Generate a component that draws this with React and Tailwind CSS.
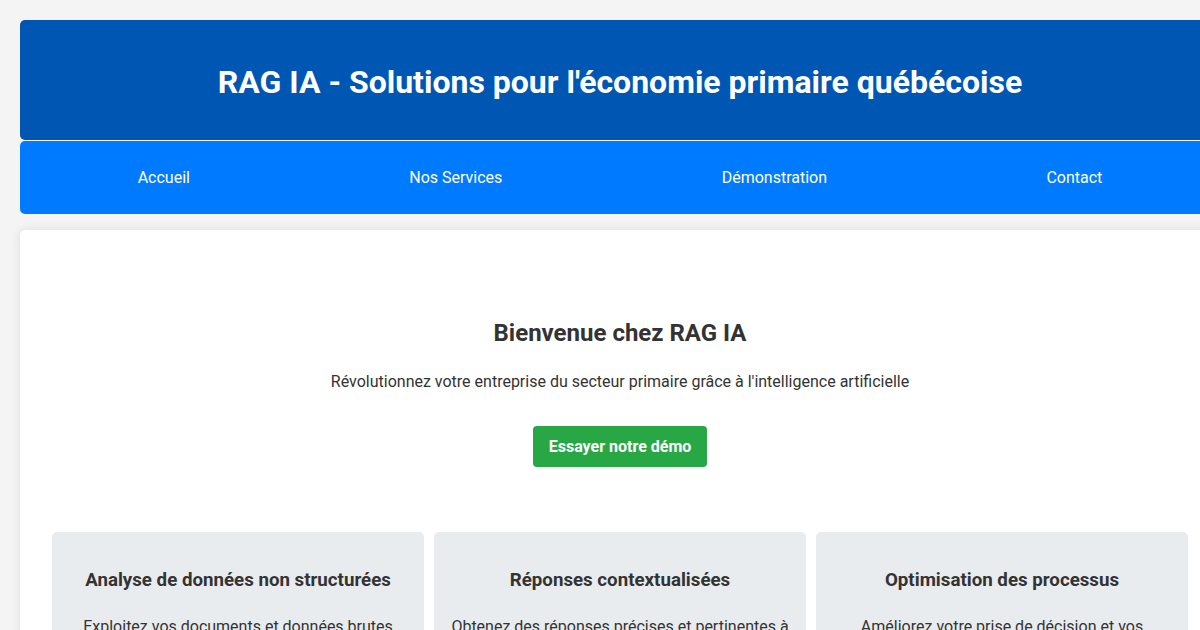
export default function App() {
  const features = [
    {
      title: "Analyse de données non structurées",
      text: "Exploitez vos documents et données brutes pour en extraire des informations précieuses.",
    },
    {
      title: "Réponses contextualisées",
      text: "Obtenez des réponses précises et pertinentes à vos questions spécifiques à votre secteur.",
    },
    {
      title: "Optimisation des processus",
      text: "Améliorez votre prise de décision et vos opérations grâce à l'IA.",
    },
  ];
  const nav = ["Accueil", "Nos Services", "Démonstration", "Contact"];
  return (
    <div
      className="w-[1200px] h-[630px] overflow-hidden bg-[#f4f4f4] text-[#333]"
      style={{ fontFamily: "Roboto, 'Liberation Sans', sans-serif" }}
    >
      <div className="pt-[20px] pl-[20px]">
        <div className="w-[1200px]">
          <header className="h-[120px] pt-[4px] bg-[#0056b3] rounded-[5px] flex items-center justify-center">
            <h1 className="text-[32px] font-bold text-white leading-[37px]">
              RAG IA - Solutions pour l'économie primaire québécoise
            </h1>
          </header>
          <nav className="mt-px h-[73px] bg-[#007bff] rounded-[5px] flex items-center justify-around px-2">
            {nav.map((n) => (
              <a key={n} className="text-white text-[16px] leading-[20px]">
                {n}
              </a>
            ))}
          </nav>
          <main className="mt-4 bg-white rounded-[5px] shadow-[0_0_10px_rgba(0,0,0,0.1)] px-8 pt-8 pb-10">
            <section className="text-center pt-[57px]">
              <h2 className="text-[24px] font-bold leading-[28px]">Bienvenue chez RAG IA</h2>
              <p className="mt-[23px] text-[16px] leading-[24px]">
                Révolutionnez votre entreprise du secteur primaire grâce à l'intelligence artificielle
              </p>
              <button className="mt-[32px] bg-[#28a745] text-white font-bold text-[16px] leading-[21px] py-[10px] px-[16px] rounded-[4px]">
                Essayer notre démo
              </button>
            </section>
            <section className="mt-[65px] grid grid-cols-3 gap-[10px]">
              {features.map((f) => (
                <div key={f.title} className="bg-[#e9ecef] rounded-[5px] px-[15px] pt-[37px] pb-6 text-center">
                  <h3 className="text-[18.72px] font-bold leading-[22px]">{f.title}</h3>
                  <p className="mt-[24px] text-[16px] leading-[24px]">{f.text}</p>
                </div>
              ))}
            </section>
          </main>
        </div>
      </div>
    </div>
  );
}
